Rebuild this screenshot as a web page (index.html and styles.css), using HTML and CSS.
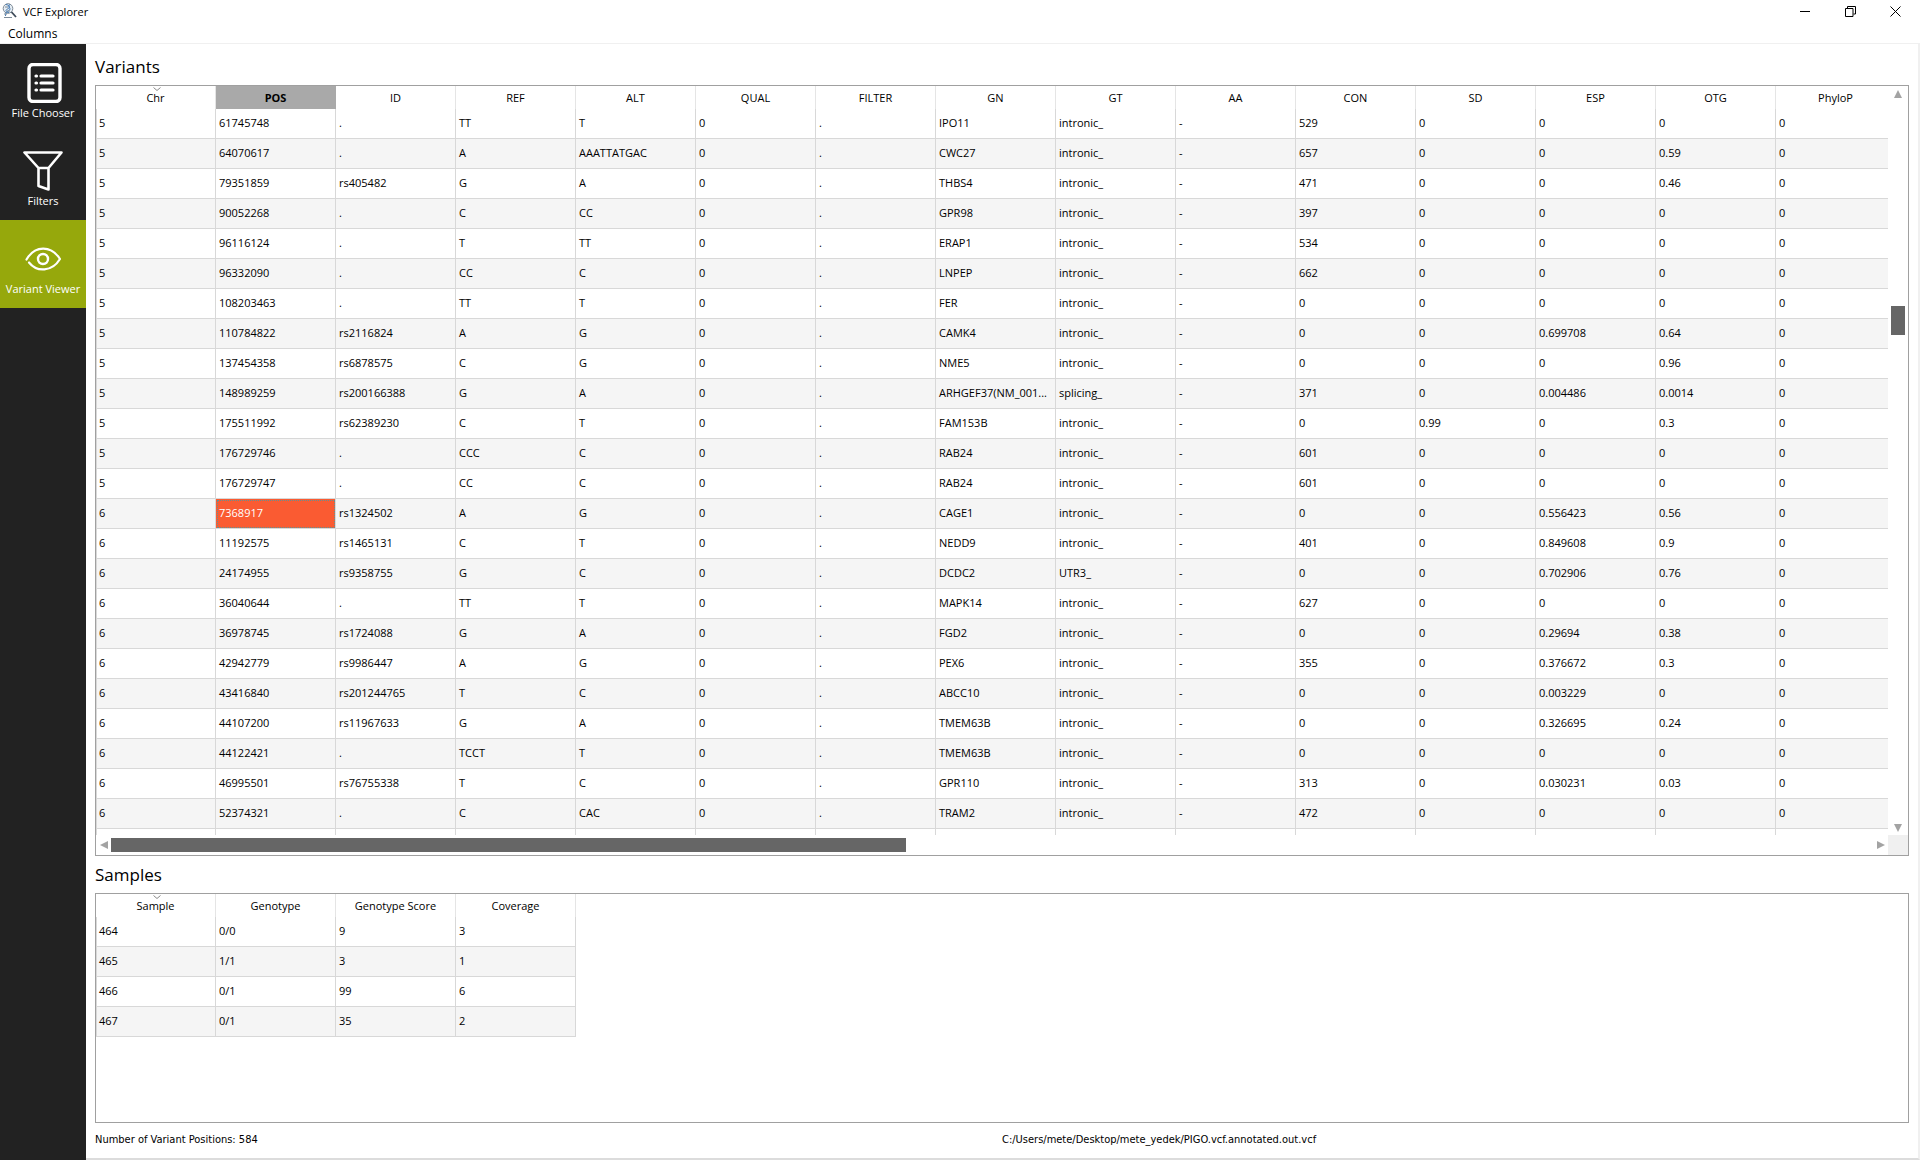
FILE: index.html
```html
<!DOCTYPE html>
<html lang="en">
  <head>
    <meta charset="UTF-8" />
    <meta name="viewport" content="width=device-width, initial-scale=1.0" />
    <title>VCF Explorer</title>
    <link rel="stylesheet" href="styles.css">
  </head>
  <body>
    <header class="titlebar">
      <svg class="logo" viewBox="0 0 16 16" width="16" height="16">
        <circle cx="6" cy="5.500" r="4.800" fill="#e6edf3" stroke="#7d8b98" />
        <path d="M4 1.500c4 1 4.500 3 1.500 4.500s-1 3.500 1.500 3.500M8 1.500c-3.500 2 1.500 3.500-.5 5.500s-4 2-4 6" fill="none" stroke="#3f78b5" />
        <path d="M3 4h3M5 8h3M2 11h3M2 14.500h8" stroke="#7d8b98" />
        <path d="M9.500 9l4.500 5" stroke="#3d4a58" stroke-width="1.800" />
      </svg>
      <span class="app-name">VCF Explorer</span>
      <div class="window-buttons">
        <button type="button" aria-label="Minimize">
          <svg viewBox="0 0 11 11" width="11" height="11"><path d="M0 5.500h10" /></svg>
        </button>
        <button type="button" aria-label="Restore">
          <svg viewBox="0 0 11 11" width="11" height="11"><path d="M.5 2.500h7.500v8H.5zM2.500 2.500v-2h8v7.500h-2" /></svg>
        </button>
        <button type="button" aria-label="Close">
          <svg viewBox="0 0 11 11" width="11" height="11"><path d="M.5.5l10 10M10.500.5l-10 10" /></svg>
        </button>
      </div>
    </header>
    <nav class="menubar">
      <button type="button">Columns</button>
    </nav>

    <div class="workspace">
      <nav class="sidebar">
        <button type="button" class="side-button">
          <svg viewBox="0 0 40 40" width="40" height="40">
            <rect x="6" y="1.500" width="31" height="37" rx="4" stroke-width="3.400" />
            <path d="M13 13h.5M18 13h12M13 20h.5M18 20h12M13 27h.5M18 27h12" stroke-width="3.200" />
          </svg>
          <span>File Chooser</span>
        </button>
        <button type="button" class="side-button">
          <svg viewBox="0 0 40 40" width="40" height="40">
            <path d="M1.500 1.500h37L25.500 17v21.500l-10-3.500V17zM15.500 17h10" stroke-width="2.600" />
          </svg>
          <span>Filters</span>
        </button>
        <button type="button" class="side-button active">
          <svg viewBox="0 0 40 40" width="40" height="40">
            <path d="M3.500 20.500C12 6 28 6 37 20c-8 13-23 13.500-31 3.500" stroke-width="2.200" />
            <circle cx="20" cy="20" r="5" stroke-width="2.400" />
          </svg>
          <span>Variant Viewer</span>
        </button>
      </nav>

      <main class="content">
        <h2>Variants</h2>
        <section class="panel variants">
          <div class="viewport">
            <table class="grid" id="variantTable"></table>
          </div>
          <div class="scrollbar vertical">
            <button type="button" aria-label="Scroll up">
              <svg viewBox="0 0 8 8" width="8" height="8"><path d="M4 0l4 8H0z" /></svg>
            </button>
            <div class="track"><div class="thumb"></div></div>
            <button type="button" aria-label="Scroll down">
              <svg viewBox="0 0 8 8" width="8" height="8"><path d="M4 8l4-8H0z" /></svg>
            </button>
          </div>
          <div class="scrollbar horizontal">
            <button type="button" aria-label="Scroll left">
              <svg viewBox="0 0 8 8" width="8" height="8"><path d="M0 4l8-4v8z" /></svg>
            </button>
            <div class="track"><div class="thumb"></div></div>
            <button type="button" aria-label="Scroll right">
              <svg viewBox="0 0 8 8" width="8" height="8"><path d="M8 4L0 0v8z" /></svg>
            </button>
          </div>
          <div class="corner"></div>
        </section>

        <h2>Samples</h2>
        <section class="panel samples">
          <table class="grid" id="sampleTable"></table>
        </section>

        <footer class="status">
          <span>Number of Variant Positions: 584</span>
          <span>C:/Users/mete/Desktop/mete_yedek/PIGO.vcf.annotated.out.vcf</span>
        </footer>
      </main>
    </div>

    <script>
      const variantColumns = ["Chr", "POS", "ID", "REF", "ALT", "QUAL", "FILTER", "GN", "GT", "AA", "CON", "SD", "ESP", "OTG", "PhyloP"];

      // Chr, POS, ID, REF, ALT, GN, GT, CON, SD, ESP, OTG
      const variants = [
        ["5", "61745748", ".", "TT", "T", "IPO11", "intronic_", "529", "0", "0", "0"],
        ["5", "64070617", ".", "A", "AAATTATGAC", "CWC27", "intronic_", "657", "0", "0", "0.59"],
        ["5", "79351859", "rs405482", "G", "A", "THBS4", "intronic_", "471", "0", "0", "0.46"],
        ["5", "90052268", ".", "C", "CC", "GPR98", "intronic_", "397", "0", "0", "0"],
        ["5", "96116124", ".", "T", "TT", "ERAP1", "intronic_", "534", "0", "0", "0"],
        ["5", "96332090", ".", "CC", "C", "LNPEP", "intronic_", "662", "0", "0", "0"],
        ["5", "108203463", ".", "TT", "T", "FER", "intronic_", "0", "0", "0", "0"],
        ["5", "110784822", "rs2116824", "A", "G", "CAMK4", "intronic_", "0", "0", "0.699708", "0.64"],
        ["5", "137454358", "rs6878575", "C", "G", "NME5", "intronic_", "0", "0", "0", "0.96"],
        ["5", "148989259", "rs200166388", "G", "A", "ARHGEF37(NM_001...", "splicing_", "371", "0", "0.004486", "0.0014"],
        ["5", "175511992", "rs62389230", "C", "T", "FAM153B", "intronic_", "0", "0.99", "0", "0.3"],
        ["5", "176729746", ".", "CCC", "C", "RAB24", "intronic_", "601", "0", "0", "0"],
        ["5", "176729747", ".", "CC", "C", "RAB24", "intronic_", "601", "0", "0", "0"],
        ["6", "7368917", "rs1324502", "A", "G", "CAGE1", "intronic_", "0", "0", "0.556423", "0.56"],
        ["6", "11192575", "rs1465131", "C", "T", "NEDD9", "intronic_", "401", "0", "0.849608", "0.9"],
        ["6", "24174955", "rs9358755", "G", "C", "DCDC2", "UTR3_", "0", "0", "0.702906", "0.76"],
        ["6", "36040644", ".", "TT", "T", "MAPK14", "intronic_", "627", "0", "0", "0"],
        ["6", "36978745", "rs1724088", "G", "A", "FGD2", "intronic_", "0", "0", "0.29694", "0.38"],
        ["6", "42942779", "rs9986447", "A", "G", "PEX6", "intronic_", "355", "0", "0.376672", "0.3"],
        ["6", "43416840", "rs201244765", "T", "C", "ABCC10", "intronic_", "0", "0", "0.003229", "0"],
        ["6", "44107200", "rs11967633", "G", "A", "TMEM63B", "intronic_", "0", "0", "0.326695", "0.24"],
        ["6", "44122421", ".", "TCCT", "T", "TMEM63B", "intronic_", "0", "0", "0", "0"],
        ["6", "46995501", "rs76755338", "T", "C", "GPR110", "intronic_", "313", "0", "0.030231", "0.03"],
        ["6", "52374321", ".", "C", "CAC", "TRAM2", "intronic_", "472", "0", "0", "0"],
      ];

      const sampleColumns = ["Sample", "Genotype", "Genotype Score", "Coverage"];
      const samples = [
        ["464", "0/0", "9", "3"],
        ["465", "1/1", "3", "1"],
        ["466", "0/1", "99", "6"],
        ["467", "0/1", "35", "2"],
      ];

      // QUAL, FILTER, AA and PhyloP are the same for every variant
      function expandVariant(v) {
        return [...v.slice(0, 5), "0", ".", v[5], v[6], "-", ...v.slice(7), "0"];
      }

      function fillTable(id, columns, rows, selected) {
        const table = document.getElementById(id);
        const sortMark = '<svg class="sort" viewBox="0 0 8 4" width="8" height="4"><path d="M.5.5L4 3.500 7.500.5" /></svg>';
        const head = columns.map((name, i) => {
          const cls = selected && name === selected.column ? ' class="current"' : "";
          return `<th scope="col"${cls}>${i === 0 ? sortMark : ""}${name}</th>`;
        });
        const body = rows.map((row) => {
          const cells = row.map((value) => {
            const cls = selected && value === selected.value ? ' class="selected"' : "";
            return `<td${cls}>${value}</td>`;
          });
          return `<tr>${cells.join("")}</tr>`;
        });
        table.innerHTML = `<thead><tr>${head.join("")}</tr></thead><tbody>${body.join("")}</tbody>`;
      }

      const variantRows = variants.map(expandVariant);
      variantRows.push(variantColumns.map(() => ""));

      fillTable("variantTable", variantColumns, variantRows, { column: "POS", value: "7368917" });
      fillTable("sampleTable", sampleColumns, samples);
    </script>
  </body>
</html>
```

FILE: styles.css
```css
* {
  box-sizing: border-box;
}
body {
  display: flex;
  flex-direction: column;
  height: 100vh;
  margin: 0;
  overflow: hidden;
  background-color: #fff;
  color: #000;
  font-family: "Open Sans", "Noto Sans", sans-serif;
  font-size: 11px;
}
button {
  padding: 0;
  border: none;
  background: none;
  color: inherit;
  font: inherit;
}
svg {
  display: block;
}

/* window frame */
.titlebar {
  display: flex;
  align-items: center;
  height: 22px;
  padding: 0 2px;
}
.app-name {
  padding-left: 5px;
}
.window-buttons {
  display: flex;
  margin-left: auto;
}
.window-buttons button {
  display: flex;
  align-items: center;
  justify-content: center;
  width: 45px;
  height: 20px;
}
.window-buttons svg {
  fill: none;
  stroke: #000;
}
.menubar {
  height: 22px;
  padding-left: 8px;
  border-bottom: 1px solid #f0f0f0;
  font-size: 12px;
}
.menubar button {
  height: 22px;
}
.workspace {
  display: flex;
  flex: 1;
  min-height: 0;
}

/* sidebar */
.sidebar {
  width: 86px;
  background-color: #222;
}
.side-button {
  display: flex;
  flex-direction: column;
  align-items: center;
  gap: 2px;
  width: 100%;
  height: 88px;
  padding-top: 19px;
  color: #fff;
  line-height: 16px;
  white-space: nowrap;
}
.side-button.active {
  background-color: #96a80c;
}
.side-button svg {
  fill: none;
  stroke: #fff;
  stroke-linecap: round;
  stroke-linejoin: round;
}

/* content */
.content {
  display: flex;
  flex: 1;
  flex-direction: column;
  min-width: 0;
  padding: 4px 9px 0;
  border-right: 2px solid #f0f0f0;
  border-bottom: 2px solid #dcdcdc;
}
h2 {
  margin: 0;
  font-size: 17px;
  font-weight: normal;
  line-height: 37px;
}
.panel {
  min-height: 0;
  overflow: hidden;
  border: 1px solid #a0a0a0;
}
.variants {
  display: grid;
  flex: 27 1 0;
  grid-template-columns: minmax(0, 1fr) 20px;
  grid-template-rows: minmax(0, 1fr) 20px;
}
.samples {
  flex: 8 1 0;
}
.viewport {
  overflow: hidden;
}

/* tables */
.grid {
  border-collapse: separate;
  border-spacing: 0;
  table-layout: fixed;
  width: 0;
}
.grid th {
  position: relative;
  width: 120px;
  height: 23px;
  padding: 0;
  border-right: 1px solid #e5e5e5;
  font-weight: normal;
}
.grid th.current {
  border-color: #a9a9a9;
  background-color: #a9a9a9;
  font-weight: bold;
}
.grid td {
  height: 30px;
  padding: 0 3px 2px;
  border-right: 1px solid #d8d8d8;
  border-bottom: 1px solid #d8d8d8;
  overflow: hidden;
  white-space: nowrap;
}
.grid td:first-child {
  padding-left: 2px;
  border-left: 1px solid #d8d8d8;
}
.grid tbody tr:nth-child(even) {
  background-color: #f5f5f5;
}
.grid td.selected {
  background-color: #fa5b32;
  color: #fff;
  outline: 1px dotted #5f9294;
  outline-offset: -2px;
}
.sort {
  position: absolute;
  top: 1px;
  left: 50%;
  margin-left: -3px;
  fill: none;
  stroke: #8a8a8a;
}

/* scrollbars */
.scrollbar {
  display: flex;
}
.scrollbar button {
  display: flex;
  flex: 0 0 15px;
  align-items: center;
  justify-content: center;
}
.scrollbar svg {
  fill: #a3a3a3;
}
.track {
  display: flex;
  flex: 1;
}
.track::before,
.track::after {
  content: "";
}
.thumb {
  background-color: #666;
}
.vertical,
.vertical .track {
  flex-direction: column;
}
.vertical .track {
  padding: 0 3px;
}
.vertical .track::before {
  flex: 205;
}
.vertical .thumb {
  flex: 29;
}
.vertical .track::after {
  flex: 486;
}
.horizontal .track {
  padding: 3px 0;
}
.horizontal .thumb {
  flex: 795;
}
.horizontal .track::after {
  flex: 967;
}
.corner {
  background-color: #f0f0f0;
}

.status {
  display: grid;
  grid-template-columns: 1fr 1fr;
  padding-bottom: 2px;
  font-family: "DejaVu Sans Condensed", "DejaVu Sans", sans-serif;
  line-height: 33px;
}
```
